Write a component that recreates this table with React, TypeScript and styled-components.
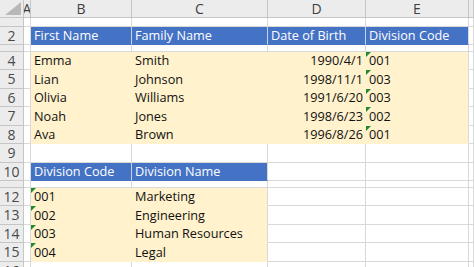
import styled, { createGlobalStyle } from "styled-components";

type Fill = "blue" | "tan";

interface ICell {
  text?: string;
  fill?: Fill;
  right?: boolean;
  mark?: boolean;
}

interface IRow {
  num: string;
  label: boolean;
  height: number;
  cells: ICell[];
}

const COLS = "24px 7px 101px 136px 98px 103px 1fr";
const GRID = "#d9d9d9";
const FILLS: Record<Fill, string> = { blue: "#4472c4", tan: "#fff2cc" };

// styled-components

const GlobalStyle = createGlobalStyle`
  html, body {
    margin: 0;
    padding: 0;
    background: #ffffff;
    overflow: hidden;
  }
`;

const Sheet = styled.div`
  width: 474px;
  height: 267px;
  overflow: hidden;
  font-family: "Open Sans", "Noto Sans", sans-serif;
`;

const HeaderRow = styled.div`
  display: grid;
  grid-template-columns: ${COLS};
  height: 18px;
  background: #ececec;
  border-bottom: 1px solid #c6c6c6;
  box-sizing: border-box;
`;

const Corner = styled.div`
  position: relative;
  border-right: 1px solid #c6c6c6;

  &::after {
    content: "";
    position: absolute;
    right: 2px;
    bottom: 2px;
    width: 16px;
    height: 13px;
    background: #b8b8b8;
    clip-path: polygon(100% 0, 100% 100%, 0 100%);
  }
`;

const ColLetter = styled.div`
  display: flex;
  justify-content: center;
  align-items: center;
  overflow: hidden;
  border-right: 1px solid #c6c6c6;
  font-size: 14px;
  color: #3f3f3f;
  line-height: 1;
`;

const SheetRow = styled.div<{ $h: number }>`
  display: grid;
  grid-template-columns: ${COLS};
  height: ${(p) => p.$h}px;
`;

const RowNum = styled.div`
  display: flex;
  justify-content: center;
  align-items: center;
  overflow: hidden;
  background: #ececec;
  border-right: 1px solid #c6c6c6;
  border-bottom: 1px solid #c6c6c6;
  font-size: 14px;
  color: #4a4a4a;
  line-height: 1;
`;

const Cell = styled.div<{ $fill?: Fill; $right?: boolean; $joinRight?: boolean }>`
  position: relative;
  display: flex;
  align-items: flex-end;
  justify-content: ${(p) => (p.$right ? "flex-end" : "flex-start")};
  padding: 0 ${(p) => (p.$right ? "2px" : "0")} 2px ${(p) => (p.$right ? "0" : "3px")};
  overflow: visible;
  white-space: nowrap;
  background: ${(p) => (p.$fill ? FILLS[p.$fill] : "transparent")};
  border-bottom: 1px solid ${(p) => (p.$fill ? FILLS[p.$fill] : GRID)};
  border-right: 1px solid
    ${(p) => (p.$fill === "blue" && p.$joinRight ? "#c5d3ee" : p.$fill && p.$joinRight ? FILLS[p.$fill] : GRID)};
  font-size: 12.7px;
  line-height: 13px;
  color: ${(p) => (p.$fill === "blue" ? "#ffffff" : "#111111")};
  box-sizing: border-box;
`;

const Mark = styled.span`
  position: absolute;
  top: 0;
  left: 0;
  width: 5px;
  height: 5px;
  background: #1d8a2e;
  clip-path: polygon(0 0, 100% 0, 0 100%);
`;

const Edge = styled.div`
  border-right: 1px solid ${GRID};
  border-bottom: 1px solid ${GRID};
`;

const h = (text: string): ICell => ({ text, fill: "blue" });
const t = (text: string, extra: Partial<ICell> = {}): ICell => ({ text, fill: "tan", ...extra });

const people = [
  ["Emma", "Smith", "1990/4/1", "001"],
  ["Lian", "Johnson", "1998/11/1", "003"],
  ["Olivia", "Williams", "1991/6/20", "003"],
  ["Noah", "Jones", "1998/6/23", "002"],
  ["Ava", "Brown", "1996/8/26", "001"],
];

const divisions = [
  ["001", "Marketing"],
  ["002", "Engineering"],
  ["003", "Human Resources"],
  ["004", "Legal"],
];

const heights4 = [18, 19, 18, 19, 18];
const heights12 = [18, 19, 18, 19];

// rows that are too short show no number, as in Excel
const rows: IRow[] = [
  { num: "1", label: false, height: 9, cells: [] },
  { num: "2", label: true, height: 18, cells: [h("First Name"), h("Family Name"), h("Date of Birth"), h("Division Code")] },
  { num: "3", label: false, height: 7, cells: [] },
  ...people.map((p, i) => ({
    num: String(i + 4),
    label: true,
    height: heights4[i],
    cells: [t(p[0]), t(p[1]), t(p[2], { right: true }), t(p[3], { mark: true })],
  })),
  { num: "9", label: true, height: 19, cells: [] },
  { num: "10", label: true, height: 18, cells: [h("Division Code"), h("Division Name")] },
  { num: "11", label: false, height: 7, cells: [] },
  ...divisions.map((d, i) => ({
    num: String(i + 12),
    label: true,
    height: heights12[i],
    cells: [t(d[0], { mark: true }), t(d[1])],
  })),
  { num: "16", label: true, height: 19, cells: [] },
];

export default function App() {
  return (
    <>
      <GlobalStyle />
      <Sheet>
        <HeaderRow>
          <Corner />
          {["A", "B", "C", "D", "E", ""].map((c, i) => (
            <ColLetter key={i}>{c}</ColLetter>
          ))}
        </HeaderRow>
        {rows.map((row) => (
          <SheetRow key={row.num} $h={row.height}>
            <RowNum>{row.label ? row.num : null}</RowNum>
            <Cell />
            {[0, 1, 2, 3].map((i) => {
              const cell = row.cells[i] || {};
              const next = row.cells[i + 1];
              return (
                <Cell key={i} $fill={cell.fill} $right={cell.right} $joinRight={!!next?.fill && next.fill === cell.fill}>
                  {cell.mark && <Mark />}
                  {cell.text}
                </Cell>
              );
            })}
            <Edge />
          </SheetRow>
        ))}
      </Sheet>
    </>
  );
}
